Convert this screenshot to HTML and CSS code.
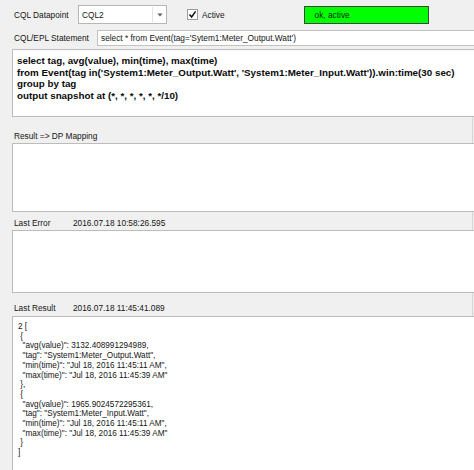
FILE: index.html
```html
<!DOCTYPE html>
<html>
<head>
<meta charset="utf-8">
<link rel="stylesheet" href="styles.css">
</head>
<body>
<div class="window">
  <div class="row top">
    <span class="lbl lbl-dp">CQL Datapoint</span>
    <div class="combo">
      <span class="combo-text">CQL2</span>
      <span class="combo-btn"><svg width="6" height="4" viewBox="0 0 6 4"><path d="M0.5 0.5 L5.5 0.5 L3 3.5 Z" fill="#5a5a5a"/></svg></span>
    </div>
    <div class="check">
      <span class="check-box"><svg width="9" height="9" viewBox="0 0 9 9"><path d="M1.5 4.6 L3.6 7 L7.6 1.4" fill="none" stroke="#111" stroke-width="1.5"/></svg></span>
      <span>Active</span>
    </div>
    <div class="status">ok, active</div>
  </div>
  <div class="row stmt">
    <span class="lbl lbl-stmt">CQL/EPL Statement</span>
    <div class="input">select * from Event(tag='Sytem1:Meter_Output.Watt')</div>
  </div>
  <div class="box sql">select tag, avg(value), min(time), max(time)
from Event(tag in('System1:Meter_Output.Watt', 'System1:Meter_Input.Watt')).win:time(30 sec)
group by tag
output snapshot at (*, *, *, *, *, */10)</div>
  <div class="lower">
    <div class="caption cap-map">Result =&gt; DP Mapping</div>
    <div class="box mapping"></div>
    <div class="caption cap-err"><span class="cap-lbl">Last Error</span><span>2016.07.18 10:58:26.595</span></div>
    <div class="box error"></div>
    <div class="caption cap-res"><span class="cap-lbl">Last Result</span><span>2016.07.18 11:45:41.089</span></div>
    <div class="box json">2 [
 {
  "avg(value)": 3132.408991294989,
  "tag": "System1:Meter_Output.Watt",
  "min(time)": "Jul 18, 2016 11:45:11 AM",
  "max(time)": "Jul 18, 2016 11:45:39 AM"
 },
 {
  "avg(value)": 1965.9024572295361,
  "tag": "System1:Meter_Input.Watt",
  "min(time)": "Jul 18, 2016 11:45:11 AM",
  "max(time)": "Jul 18, 2016 11:45:39 AM"
 }
]</div>
  </div>
</div>
</body>
</html>
```

FILE: styles.css
```css
html, body {
  margin: 0;
  padding: 0;
  background: #f0f0f0;
  overflow: hidden;
}
body {
  width: 474px;
  height: 470px;
  font-family: "Liberation Sans", Arial, sans-serif;
  font-size: 8.3px;
  color: #141414;
}
.window {
  width: 474px;
  height: 470px;
  position: relative;
}
.row {
  display: flex;
  align-items: center;
}
.top {
  height: 19px;
  padding-top: 5px;
}
.lbl {
  padding-left: 14px;
  box-sizing: border-box;
  flex: none;
  white-space: nowrap;
}
.lbl-dp { width: 78px; }
.lbl-stmt { width: 97px; }
.combo {
  width: 89px;
  height: 19px;
  box-sizing: border-box;
  background: #fff;
  border: 1px solid #b6b6b6;
  display: flex;
  align-items: center;
}
.combo-text {
  flex: 1;
  padding-left: 3px;
}
.combo-btn {
  width: 13px;
  height: 15px;
  border-left: 1px solid #e2e2e2;
  display: flex;
  align-items: center;
  justify-content: center;
}
.combo-btn svg { display: block; }
.check {
  display: flex;
  align-items: center;
  margin-left: 20px;
  gap: 4px;
}
.check-box {
  width: 9px;
  height: 9px;
  background: #fff;
  border: 1px solid #9c9c9c;
  display: block;
}
.check-box svg { display: block; }
.status {
  margin-left: 79px;
  width: 125px;
  height: 18px;
  box-sizing: border-box;
  background: #00ff00;
  border: 1px solid #3a4a3a;
  padding-left: 10px;
  display: flex;
  align-items: center;
  color: #1a1a1a;
}
.stmt {
  margin-top: 6px;
  height: 16px;
}
.input {
  flex: 1;
  height: 16px;
  box-sizing: border-box;
  margin-right: -10px;
  background: #fff;
  border: 1px solid #c2c2c2;
  padding-left: 3px;
  display: flex;
  align-items: center;
  white-space: nowrap;
}
.box {
  background: #fff;
  border: 1px solid #bcbcbc;
  margin-left: 12px;
  margin-right: -10px;
  box-sizing: border-box;
  white-space: pre;
}
.sql {
  margin-top: 3px;
  height: 68px;
  padding: 5px 0 0 4px;
  font-weight: bold;
  font-size: 9.8px;
  line-height: 11.7px;
  color: #0a0a0a;
}
.lower {
  width: 472px;
  border-right: 1px solid #d6d6d6;
  height: 353px;
}
.caption {
  height: 10px;
  line-height: 10px;
  padding-left: 14px;
  display: flex;
  white-space: nowrap;
}
.cap-lbl {
  width: 59px;
  flex: none;
}
.cap-map { padding-top: 14px; padding-bottom: 2px; }
.cap-err { padding-top: 6px; padding-bottom: 2px; }
.cap-res { padding-top: 10px; padding-bottom: 3px; }
.mapping { height: 69px; }
.error { height: 63px; }
.json {
  height: 160px;
  padding: 5px 0 0 5px;
  line-height: 9.7px;
  font-size: 8.2px;
}
```
